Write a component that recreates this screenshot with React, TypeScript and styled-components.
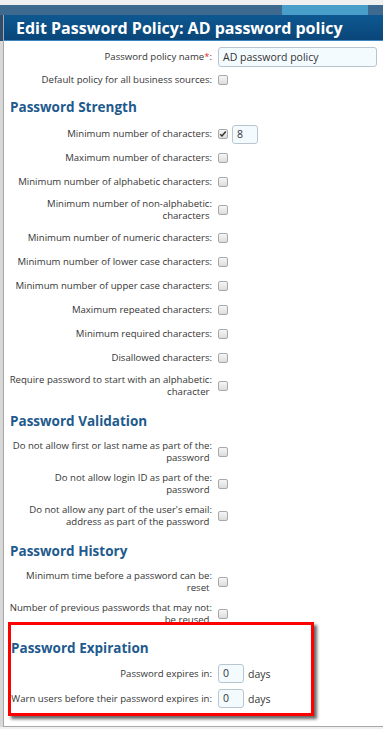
import React from 'react';
import styled, { createGlobalStyle } from 'styled-components';

const GlobalStyle = createGlobalStyle`
  html, body {
    margin: 0;
    padding: 0;
    background: #f0f0f0;
  }
  body {
    font-family: "Open Sans", "Liberation Sans", Arial, sans-serif;
    color: #3a3a3a;
  }
  * { box-sizing: border-box; }
`;

const Page = styled.div`
  width: 383px;
  height: 729px;
  overflow: hidden;
  display: flex;
  flex-direction: column;
  padding-top: 5px;
  background: #f0f0f0;
`;

const NavBar = styled.div`
  flex: none;
  height: 10px;
  display: flex;
  background: #3f6a8f;
`;

const NavTab = styled.div<{ $active?: boolean; $width?: number }>`
  width: ${({ $width }) => ($width ? `${$width}px` : 'auto')};
  flex: ${({ $width }) => ($width ? 'none' : '1')};
  background: ${({ $active }) => ($active ? '#4a9fca' : 'transparent')};
`;

const Frame = styled.div`
  flex: none;
  display: flex;
  padding-left: 3px;
  background: linear-gradient(#2d4e6c 0, #2d4e6c 26px, #d8d8d8 26px);
`;

const Dialog = styled.div`
  flex: 1;
  background: #fff;
  border-left: 1px solid #a8a8a8;
  border-bottom: 1px solid #a8a8a8;
  display: flex;
  flex-direction: column;
`;

const Header = styled.div`
  flex: none;
  height: 26px;
  background: linear-gradient(#0d5891, #0a4679);
  border-bottom: 1px solid #3d86bd;
  display: flex;
  align-items: center;
  padding-left: 12px;
`;

const Title = styled.h1`
  margin: 0;
  font-size: 16px;
  font-weight: 700;
  color: #fff;
  line-height: 20px;
  white-space: nowrap;
`;

const Content = styled.div`
  padding: 5px 0 10px 6px;
  display: flex;
  flex-direction: column;
`;

const Heading = styled.h2<{ $first?: boolean; $boxed?: boolean }>`
  margin: 0;
  font-size: 13.5px;
  font-weight: 700;
  color: #1e5a8d;
  line-height: 18px;
  padding: ${({ $first, $boxed }) => ($first ? '6px 0 6px' : $boxed ? '14px 0 4px' : '10px 0 6px')};
  padding-left: 0;
`;

const Row = styled.div<{ $short?: boolean; $tall?: boolean }>`
  display: grid;
  grid-template-columns: 202px 1fr;
  column-gap: 6px;
  align-items: center;
  min-height: ${({ $short, $tall }) => ($short ? '22px' : $tall ? '25px' : '24px')};
  padding: ${({ $short }) => ($short ? '1px 0' : '2px 0')};
`;

const Label = styled.div`
  display: flex;
  justify-content: flex-end;
  font-size: 9.6px;
  line-height: 12px;
  padding: 2px 0;
  color: #363636;
`;

const LabelText = styled.span`
  text-align: right;
  white-space: nowrap;
`;

const Colon = styled.span`
  flex: none;
`;

const Required = styled.span`
  color: #e52d2d;
`;

const Controls = styled.div`
  display: flex;
  align-items: center;
  gap: 4px;
  font-size: 10.5px;
  color: #363636;
`;

const Box = styled.span`
  width: 10px;
  height: 10px;
  flex: none;
  border: 1px solid #a9a9a9;
  border-radius: 2px;
  background: linear-gradient(#f6f6f6, #dcdcdc);
  display: inline-flex;
  align-items: center;
  justify-content: center;
`;

const TextInput = styled.div<{ $width: number; $height: number }>`
  width: ${({ $width }) => $width}px;
  height: ${({ $height }) => $height}px;
  border: 1px solid #b9c6d0;
  border-radius: 3px;
  background: #f4fbff;
  font-size: 10.5px;
  line-height: ${({ $height }) => $height - 2}px;
  padding-left: 4px;
  color: #333;
  white-space: nowrap;
`;

const Highlight = styled.section`
  position: relative;
  margin-top: -8px;
  margin-left: -2px;
  width: 306px;
  border: 3px solid #ff0000;
  box-shadow: 3px 3px 3px rgba(0, 0, 0, 0.6);
  padding-bottom: 2px;

  & > ${Row} {
    margin-left: -1px;
  }
`;

const Checkbox = ({ checked }: { checked?: boolean }) => (
  <Box>
    {checked && (
      <svg width="8" height="8" viewBox="0 0 8 8">
        <path d="M1.2 4.2 L3 6 L6.8 1.6" fill="none" stroke="#333" strokeWidth="1.5" />
      </svg>
    )}
  </Box>
);

type Field = { label: string; checked?: boolean; value?: string };

const FieldRow = ({ label, checked, value }: Field) => (
  <Row>
    <Label>
      <LabelText>{label}</LabelText>
      <Colon>:</Colon>
    </Label>
    <Controls>
      <Checkbox checked={checked} />
      {value && (
        <TextInput $width={26} $height={19}>
          {value}
        </TextInput>
      )}
    </Controls>
  </Row>
);

// two-line labels keep the colon at the end of the first line
const WrapRow = ({ first, second, checked }: { first: string; second: string; checked?: boolean }) => (
  <Row>
    <Label>
      <LabelText>
        {first}:
        <br />
        {second}&nbsp;
      </LabelText>
    </Label>
    <Controls>
      <Checkbox checked={checked} />
    </Controls>
  </Row>
);

const DaysRow = ({ label }: { label: string }) => (
  <Row $tall>
    <Label>
      <LabelText>{label}</LabelText>
      <Colon>:</Colon>
    </Label>
    <Controls>
      <TextInput $width={26} $height={19}>0</TextInput>
      <span>days</span>
    </Controls>
  </Row>
);

export default function App() {
  return (
    <>
      <GlobalStyle />
      <Page>
        <NavBar>
          <NavTab $width={282} />
          <NavTab $width={86} $active />
          <NavTab />
        </NavBar>
        <Frame>
          <Dialog>
            <Header>
              <Title>Edit Password Policy: AD password policy</Title>
            </Header>
            <Content>
              <Row $short>
                <Label>
                  <LabelText>
                    Password policy name<Required>*</Required>
                  </LabelText>
                  <Colon>:</Colon>
                </Label>
                <Controls>
                  <TextInput $width={159} $height={20}>AD password policy</TextInput>
                </Controls>
              </Row>
              <FieldRow label="Default policy for all business sources" />

              <Heading $first>Password Strength</Heading>
              <FieldRow label="Minimum number of characters" checked value="8" />
              <FieldRow label="Maximum number of characters" />
              <FieldRow label="Minimum number of alphabetic characters" />
              <WrapRow first="Minimum number of non-alphabetic" second="characters" />
              <FieldRow label="Minimum number of numeric characters" />
              <FieldRow label="Minimum number of lower case characters" />
              <FieldRow label="Minimum number of upper case characters" />
              <FieldRow label="Maximum repeated characters" />
              <FieldRow label="Minimum required characters" />
              <FieldRow label="Disallowed characters" />
              <WrapRow first="Require password to start with an alphabetic" second="character" />

              <Heading>Password Validation</Heading>
              <WrapRow first="Do not allow first or last name as part of the" second="password" />
              <WrapRow first="Do not allow login ID as part of the" second="password" />
              <WrapRow first="Do not allow any part of the user's email" second="address as part of the password" />

              <Heading>Password History</Heading>
              <WrapRow first="Minimum time before a password can be" second="reset" />
              <WrapRow first="Number of previous passwords that may not" second="be reused" />

              <Highlight>
                <Heading $boxed>Password Expiration</Heading>
                <DaysRow label="Password expires in" />
                <DaysRow label="Warn users before their password expires in" />
              </Highlight>
            </Content>
          </Dialog>
        </Frame>
      </Page>
    </>
  );
}
